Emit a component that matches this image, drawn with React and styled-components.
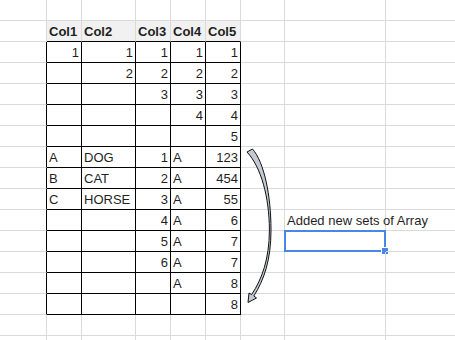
import React from "react";
import styled, { createGlobalStyle } from "styled-components";

const Global = createGlobalStyle`
  html, body { margin: 0; padding: 0; background: #fff; overflow: hidden; }
  body { font-family: "Liberation Sans", Arial, sans-serif; }
`;

const Wrap = styled.div`
  position: relative;
  width: 455px;
  height: 340px;
  overflow: hidden;
`;

const Sheet = styled.div`
  display: grid;
  grid-template-columns: 47px 35px 54px 35px 35px 35px 44px 101px 100px 100px;
  grid-auto-rows: 21px;
  width: max-content;
`;

const GRID = "#dadada";
const INK = "#000";

const Cell = styled.div`
  box-sizing: border-box;
  position: relative;
  border-right: 1px solid ${(p) => (p.$inkRight ? INK : GRID)};
  border-bottom: 1px solid ${(p) => (p.$inkBottom ? INK : GRID)};
  background: ${(p) => (p.$head ? "#f1f1f1" : "transparent")};
  padding: 2px 2px 0 2px;
  font-size: 13px;
  line-height: 18px;
  font-weight: ${(p) => (p.$head ? 700 : 400)};
  color: #1f1f1f;
  text-align: ${(p) => (p.$num ? "right" : "left")};
  white-space: nowrap;
  overflow: visible;
`;

const Selection = styled.div`
  position: absolute;
  inset: -1px;
  box-sizing: border-box;
  border: 2px solid #4a86e8;
  pointer-events: none;
`;

const Handle = styled.div`
  position: absolute;
  right: -4px;
  bottom: -4px;
  width: 6px;
  height: 6px;
  background: #4a86e8;
  box-shadow: 0 0 0 1px #fff;
`;

const ArrowSvg = styled.svg`
  position: absolute;
  left: 240px;
  top: 140px;
  pointer-events: none;
`;

const COLS = 10;
const headers = ["Col1", "Col2", "Col3", "Col4", "Col5"];
const data = [
  [1, 1, 1, 1, 1],
  ["", 2, 2, 2, 2],
  ["", "", 3, 3, 3],
  ["", "", "", 4, 4],
  ["", "", "", "", 5],
  ["A", "DOG", 1, "A", 123],
  ["B", "CAT", 2, "A", 454],
  ["C", "HORSE", 3, "A", 55],
  ["", "", 4, "A", 6],
  ["", "", 5, "A", 7],
  ["", "", 6, "A", 7],
  ["", "", "", "A", 8],
  ["", "", "", "", 8],
];

function buildRows() {
  const rows = [];
  // top partial row
  rows.push(Array.from({ length: COLS }, () => ({})));
  // header row
  rows.push(
    Array.from({ length: COLS }, (_, c) =>
      c >= 1 && c <= 5 ? { text: headers[c - 1], head: true, inkBottom: true } : {}
    )
  );
  data.forEach((vals, i) => {
    rows.push(
      Array.from({ length: COLS }, (_, c) => {
        if (c === 0) return { inkRight: true };
        if (c >= 1 && c <= 5) {
          const v = vals[c - 1];
          return {
            text: v === "" ? "" : String(v),
            num: typeof v === "number",
            inkRight: true,
            inkBottom: true,
          };
        }
        if (c === 7 && i === 8) return { text: "Added new sets of Array" };
        if (c === 7 && i === 9) return { selected: true };
        return {};
      })
    );
  });
  rows.push(Array.from({ length: COLS }, () => ({})));
  rows.push(Array.from({ length: COLS }, () => ({})));
  return rows;
}

const rows = buildRows();

function CurvedArrow() {
  return (
    <ArrowSvg width="40" height="170" viewBox="0 0 40 170">
      <path
        d="M 12.5 9 C 24 22, 31 55, 31 90 C 31 120, 24 140, 13.8 156 L 16.5 158 L 8 162.5 L 9 153 L 11.6 154.6 C 22 139, 29.3 119, 29.4 90 C 29.3 57, 21 27, 7 12 Z"
        fill="#c3cad3"
        stroke="#111"
        strokeWidth="1"
        strokeLinejoin="round"
      />
    </ArrowSvg>
  );
}

export default function App() {
  return (
    <Wrap>
      <Global />
      <Sheet>
        {rows.map((row, r) =>
          row.map((cell, c) => (
            <Cell
              key={`${r}-${c}`}
              $head={cell.head}
              $num={cell.num}
              $inkRight={cell.inkRight}
              $inkBottom={cell.inkBottom}
            >
              {cell.text}
              {cell.selected && (
                <Selection>
                  <Handle />
                </Selection>
              )}
            </Cell>
          ))
        )}
      </Sheet>
      <CurvedArrow />
    </Wrap>
  );
}
